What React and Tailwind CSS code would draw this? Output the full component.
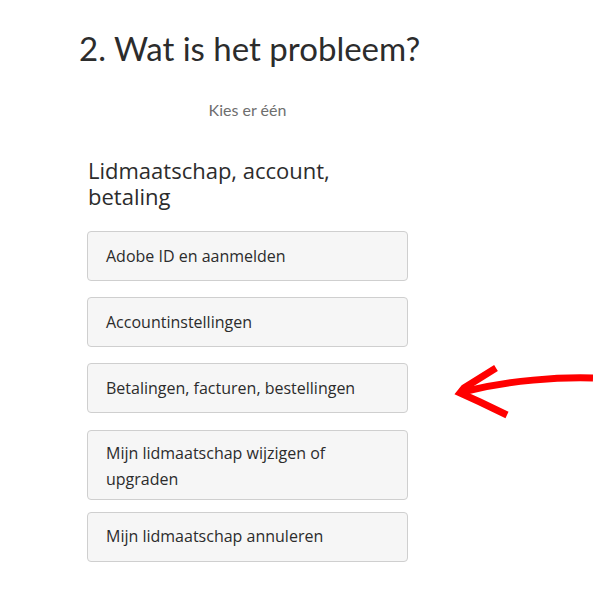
export default function App() {
  const items = [
    { t: "Adobe ID en aanmelden", cls: "h-[50px] pt-[11px]" },
    { t: "Accountinstellingen", cls: "h-[50px] pt-[11px] mt-[16px]" },
    { t: "Betalingen, facturen, bestellingen", cls: "h-[50px] pt-[11px] mt-[16px]" },
    { t: "Mijn lidmaatschap wijzigen of upgraden", cls: "h-[70px] pt-[9px] mt-[17px]" },
    { t: "Mijn lidmaatschap annuleren", cls: "h-[50px] pt-[10px] mt-[12px]" },
  ];
  return (
    <div className="relative w-[593px] h-[599px] bg-white overflow-hidden text-[#2c2c2c]" style={{ fontFamily: '"Open Sans", Lato, sans-serif' }}>
      <div className="pt-[26px]">
        <h1 className="ml-[79px] text-[33px] leading-[44px] font-normal text-[#2c2c2c]" style={{ fontFamily: 'Lato, sans-serif' }}>2. Wat is het probleem?</h1>
        <div className="ml-[87px] w-[321px]">
          <p className="mt-[28px] text-center text-[16px] leading-[24px] text-[#6e6e6e]" style={{ fontFamily: 'Lato, sans-serif' }}>Kies er één</p>
          <h2 className="mt-[35px] ml-[1px] text-[22px] leading-[26px] font-normal w-[260px]">Lidmaatschap, account, betaling</h2>
          <div className="mt-[22px] flex flex-col">
            {items.map(({ t, cls }) => (
              <div key={t} className={`rounded-[4px] border border-[#cfcfcf] bg-[#f6f6f6] pl-[18px] pr-[40px] text-[16px] leading-[26px] ${cls}`}>
                {t}
              </div>
            ))}
          </div>
        </div>
      </div>
      <svg className="absolute left-[450px] top-[360px]" width="143" height="60" viewBox="0 0 143 60" fill="none">
        <path d="M143 18 C110 17 60 20 12 32" stroke="#ff0000" strokeWidth="7" strokeLinecap="butt" />
        <path d="M46 8 L14 28 L10 33 L30 42 L57 55" stroke="#ff0000" strokeWidth="7" strokeLinejoin="miter" />
      </svg>
    </div>
  );
}
